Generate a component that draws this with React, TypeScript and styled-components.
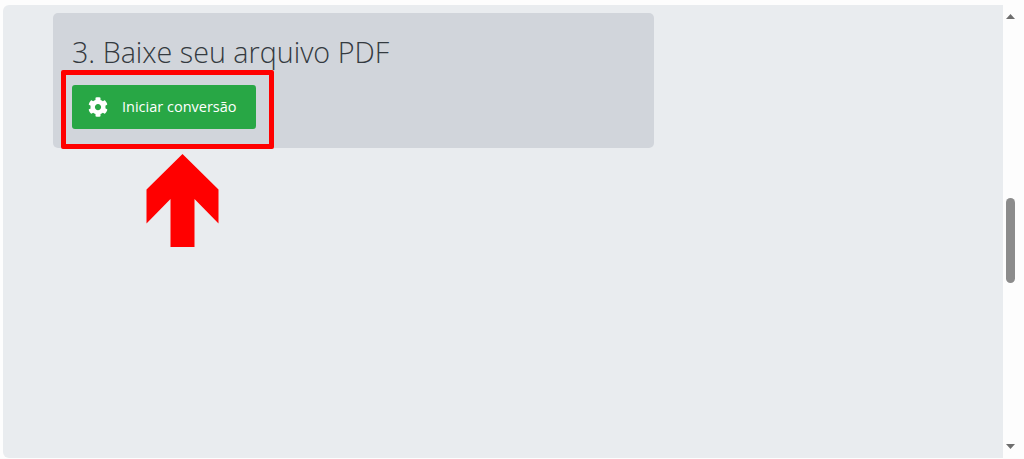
import React from "react";
import styled, { createGlobalStyle } from "styled-components";
import { FaCog } from "react-icons/fa";

const Global = createGlobalStyle`
  html, body { margin: 0; padding: 0; background: #fdfdfd; overflow: hidden; }
  body { font-family: "Open Sans", "Liberation Sans", sans-serif; }
`;

const Page = styled.div`
  position: relative;
  display: flex;
  width: 1024px;
  height: 459px;
  box-sizing: border-box;
  padding: 5px 0 1px 3px;
  background: #fdfdfd;
`;

const Panel = styled.main`
  flex: 1;
  box-sizing: border-box;
  padding: 8px 349px 0 50px;
  background: #e9ecef;
  border-radius: 6px 0 0 6px;
`;

const Card = styled.section`
  box-sizing: border-box;
  height: 135px;
  padding: 19px 19px 0;
  background: #d1d5db;
  border-radius: 5px;
`;

const Title = styled.h2`
  margin: 0 0 12.500px;
  font-size: 28.700px;
  line-height: 40px;
  font-weight: 300;
  color: #343a40;
`;

const Button = styled.button`
  display: flex;
  align-items: center;
  gap: 14px;
  width: 184px;
  height: 44px;
  padding: 0 0 0 16px;
  border: none;
  border-radius: 3px;
  background: #28a745;
  color: #fff;
  font: 400 14.500px "Open Sans", "Liberation Sans", sans-serif;
`;

const Scrollbar = styled.aside`
  position: relative;
  width: 21px;
  display: flex;
  flex-direction: column;
  align-items: center;
  padding: 9px 6px 9px 0;
  box-sizing: border-box;
`;

const Thumb = styled.div`
  width: 9px;
  height: 85px;
  margin-top: 179px;
  background: #8c8c8c;
  border-radius: 5px;
`;

const Spacer = styled.div`
  flex: 1;
`;

const Highlight = styled.div`
  position: absolute;
  left: 61px;
  top: 70px;
  width: 213px;
  height: 79px;
  box-sizing: border-box;
  border: 5px solid #ff0000;
  border-radius: 2px;
`;

const Arrow = styled.svg`
  position: absolute;
  left: 146px;
  top: 154px;
`;

const ScrollArrow = styled.svg`
  display: block;
  flex: none;
`;

export default function App() {
  return (
    <Page>
      <Global />
      <Panel>
        <Card>
          <Title>3. Baixe seu arquivo PDF</Title>
          <Button>
            <FaCog size={20} />
            Iniciar conversão
          </Button>
        </Card>
      </Panel>
      <Scrollbar>
        <ScrollArrow width="9" height="5" viewBox="0 0 9 5">
          <path d="M4.500 0 L9 5 H0 Z" fill="#6e6e6e" />
        </ScrollArrow>
        <Thumb />
        <Spacer />
        <ScrollArrow width="9" height="5" viewBox="0 0 9 5">
          <path d="M0 0 H9 L4.500 5 Z" fill="#6e6e6e" />
        </ScrollArrow>
      </Scrollbar>
      <Highlight />
      <Arrow width="73" height="94" viewBox="0 0 73 94">
        <path d="M36.500 0 L72.500 35.500 V69.500 L48.500 45 V93 H24.500 V45 L0.500 69.500 V35.500 Z" fill="#ff0000" />
      </Arrow>
    </Page>
  );
}
